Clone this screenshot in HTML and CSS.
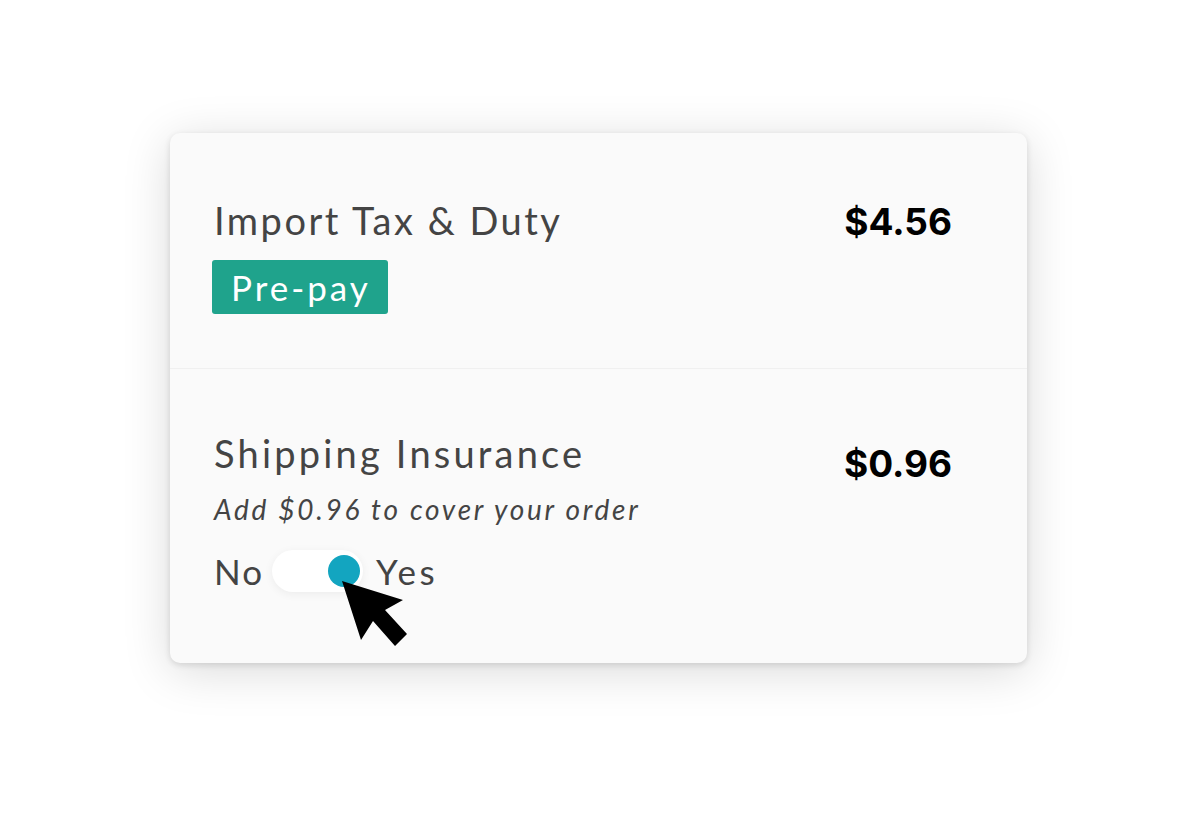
FILE: index.html
```html
<!DOCTYPE html>
<html lang="en">
<head>
    <meta charset="UTF-8">
    <title>Order extras</title>
    <link rel="stylesheet" href="styles.css">
</head>
<body>
<div class="card">
    <div class="row">
        <div class="info">
            <div class="title">Import Tax &amp; Duty</div>
            <span class="badge">Pre-pay</span>
        </div>
        <div class="price">$4.56</div>
    </div>

    <div class="row second">
        <div class="info">
            <div class="title">Shipping Insurance</div>
            <div class="note">Add $0.96 to cover your order</div>
            <div class="switch-line">
                <span>No</span>
                <span class="switch">
                    <span class="knob"></span>
                    <svg class="cursor" width="80" height="80" viewBox="0 0 80 80">
                        <polygon points="2,3 21,62 33,43 55,68 67,56 45,32 63,22" fill="#000"/>
                    </svg>
                </span>
                <span class="yes">Yes</span>
            </div>
        </div>
        <div class="price">$0.96</div>
    </div>
</div>
</body>
</html>
```

FILE: styles.css
```css
body {
    margin: 0;
    padding: 133px 0 150px 170px;
    background: #fff;
    font-family: Lato, sans-serif;
}

.card {
    width: 857px;
    height: 530px;
    background: #fafafa;
    border-radius: 10px;
    box-shadow: 0 8px 48px rgba(0, 0, 0, 0.15), 0 2px 6px rgba(0, 0, 0, 0.12);
}

.row {
    display: flex;
    justify-content: space-between;
    height: 236px;
    padding: 0 75px 0 44px;
    border-bottom: 1px solid #f0f0f0;
    box-sizing: border-box;
}

.row.second {
    border-bottom: none;
    height: 294px;
}

.info {
    padding-top: 64px;
}

.second .info {
    padding-top: 61px;
}

.title {
    font-size: 38px;
    line-height: 46px;
    color: #444;
    letter-spacing: 2.5px;
}

.second .title {
    letter-spacing: 3.2px;
}

.badge {
    display: inline-block;
    margin: 17px 0 0 -2px;
    background: #1fa38c;
    color: #fff;
    font-size: 35px;
    line-height: 54px;
    padding: 0 17px 0 19px;
    border-radius: 3px;
    letter-spacing: 3px;
}

.note {
    font-size: 28px;
    font-style: italic;
    color: #444;
    line-height: 34px;
    margin-top: 16px;
    letter-spacing: 2.7px;
}

.switch-line {
    display: flex;
    align-items: center;
    gap: 8px;
    margin-top: 24px;
    font-size: 35px;
    color: #444;
    letter-spacing: 2px;
}

.switch-line .yes {
    margin-left: 5px;
    letter-spacing: 3.5px;
}

.switch {
    position: relative;
    width: 91px;
    height: 42px;
    background: #fff;
    border-radius: 21px;
    box-shadow: 0 2px 10px rgba(0, 0, 0, 0.06);
}

.knob {
    position: absolute;
    right: 3px;
    top: 5px;
    width: 32px;
    height: 32px;
    border-radius: 50%;
    background: #13a5c0;
}

.cursor {
    position: absolute;
    left: 68px;
    top: 28px;
}

.price {
    padding-top: 66px;
    font-family: Inter, sans-serif;
    font-weight: bold;
    font-size: 37px;
    color: #000;
}

.second .price {
    padding-top: 72px;
}
```
